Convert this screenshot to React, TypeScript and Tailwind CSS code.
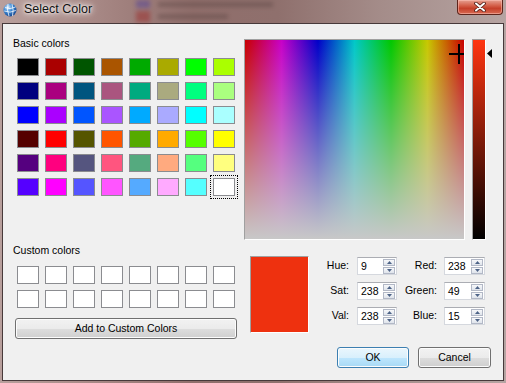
import React from 'react';

// Qt's standard palette, row by row
const BASIC_COLORS = [
  ['#000000', '#aa0000', '#005500', '#aa5500', '#00aa00', '#aaaa00', '#00ff00', '#aaff00'],
  ['#00007f', '#aa007f', '#00557f', '#aa557f', '#00aa7f', '#aaaa7f', '#00ff7f', '#aaff7f'],
  ['#0000ff', '#aa00ff', '#0055ff', '#aa55ff', '#00aaff', '#aaaaff', '#00ffff', '#aaffff'],
  ['#550000', '#ff0000', '#555500', '#ff5500', '#55aa00', '#ffaa00', '#55ff00', '#ffff00'],
  ['#55007f', '#ff007f', '#55557f', '#ff557f', '#55aa7f', '#ffaa7f', '#55ff7f', '#ffff7f'],
  ['#5500ff', '#ff00ff', '#5555ff', '#ff55ff', '#55aaff', '#ffaaff', '#55ffff', '#ffffff'],
];

const Swatch = ({ color, focused }: { color: string; focused?: boolean }) => (
  <div
    className={`h-[18px] w-[22px] border border-[#8b8c90] ${
      focused ? 'outline-1 outline-offset-2 outline-dotted outline-black' : ''
    }`}
    style={{ backgroundColor: color }}
  />
);

const SpinButton = ({ up }: { up?: boolean }) => (
  <div className="flex h-[7px] w-[12px] items-center justify-center border border-[#b2b8c6] bg-[linear-gradient(to_bottom,#f7f8fa,#dfe4ec)]">
    <svg width="5" height="3" viewBox="0 0 5 3">
      {up ? <path d="M0 3 L2.5 0 L5 3 Z" fill="#4d6387" /> : <path d="M0 0 L2.5 3 L5 0 Z" fill="#4d6387" />}
    </svg>
  </div>
);

const SpinBox = ({ value, wide }: { value: string; wide?: boolean }) => (
  <div
    className={`flex h-[18px] items-center border border-[#d5d8de] border-t-[#abadb3] bg-white ${
      wide ? 'w-[41px]' : 'w-[40px]'
    }`}
  >
    <span className="flex-1 pl-[3px] pt-[1px] leading-none text-black">{value}</span>
    <div className="mr-[1px] flex flex-col gap-[1px]">
      <SpinButton up />
      <SpinButton />
    </div>
  </div>
);

const WinButton = ({ label, isDefault, className }: { label: string; isDefault?: boolean; className?: string }) => (
  <div
    className={`flex h-[21px] items-center justify-center rounded-[3px] border text-black shadow-[inset_0_0_0_1px_#fcfcfc] ${
      isDefault
        ? 'border-[#3c7fb1] bg-[linear-gradient(to_bottom,#eaf6fd_0%,#d9f0fc_50%,#bee6fd_51%,#a7d9f5_100%)]'
        : 'border-[#707070] bg-[linear-gradient(to_bottom,#f2f2f2_0%,#ebebeb_50%,#dddddd_51%,#cfcfcf_100%)]'
    } ${className ?? ''}`}
  >
    {label}
  </div>
);

export default function App() {
  const spinRows = [
    { l: 'Hue:', lv: '9', r: 'Red:', rv: '238' },
    { l: 'Sat:', lv: '238', r: 'Green:', rv: '49' },
    { l: 'Val:', lv: '238', r: 'Blue:', rv: '15' },
  ];

  return (
    <div className="flex h-[383px] w-[506px] flex-col overflow-hidden bg-[linear-gradient(to_right,#b89f9c_0%,#a88986_18%,#906e6b_38%,#8f706d_55%,#a48c89_75%,#b6a4a2_100%)] font-['Liberation_Sans',Arial,sans-serif] text-[10.5px] text-black">
      {/* ─── Title bar ─────────────────────────────────────────── */}
      <div className="flex h-[23px] shrink-0 items-start">
        <svg className="ml-[3px] mt-[3px]" width="14" height="14" viewBox="0 0 14 14">
          <defs>
            <radialGradient id="globe" cx="35%" cy="30%" r="75%">
              <stop offset="0%" stopColor="#d6ecfc" />
              <stop offset="45%" stopColor="#3d8ad6" />
              <stop offset="100%" stopColor="#16468e" />
            </radialGradient>
          </defs>
          <circle cx="7" cy="7" r="6.5" fill="url(#globe)" />
          <path d="M2 4.5 Q7 7 12.5 4" stroke="#fff" strokeWidth="0.9" fill="none" opacity="0.85" />
          <path d="M1.2 8 Q7 10.5 12.8 7.5" stroke="#fff" strokeWidth="0.9" fill="none" opacity="0.85" />
          <path d="M5 1 Q3.5 7 6 13" stroke="#fff" strokeWidth="0.9" fill="none" opacity="0.85" />
          <path d="M9 1 Q11 7 9.5 13" stroke="#fff" strokeWidth="0.9" fill="none" opacity="0.85" />
        </svg>
        <span className="ml-[7px] mt-[2px] text-[12.5px] leading-[15px] text-[#111] [text-shadow:0_0_6px_#fff,0_0_10px_#fff,0_0_3px_#fff]">
          Select Color
        </span>

        {/* blurred windows behind the glass */}
        <div className="ml-[44px] flex flex-col gap-[3px] opacity-45 blur-[2px]">
          <div className="flex items-center gap-[8px]">
            <div className="h-[8px] w-[14px] bg-[#4b3c9c]" />
            <div className="h-[5px] w-[115px] bg-[#5a4442]" />
          </div>
          <div className="flex items-center gap-[8px]">
            <div className="h-[11px] w-[14px] bg-[#9b2222]" />
            <div className="h-[5px] w-[70px] bg-[#5a4442]" />
          </div>
        </div>

        <div className="ml-auto mr-[3px] flex h-[15px] w-[46px] items-center justify-center rounded-b-[4px] border border-t-0 border-[#5e241b] bg-[linear-gradient(to_bottom,#e6a091_0%,#d4604a_40%,#c5402a_60%,#d86a52_100%)] shadow-[inset_0_0_0_1px_rgba(255,200,190,0.5)]">
          <svg width="12" height="10" viewBox="0 0 12 10">
            <path d="M2 1.5 L10 8.5 M10 1.5 L2 8.5" stroke="#4a1a14" strokeWidth="3.6" strokeLinecap="round" />
            <path d="M2 1.5 L10 8.5 M10 1.5 L2 8.5" stroke="#fff" strokeWidth="2" strokeLinecap="round" />
          </svg>
        </div>
      </div>

      {/* ─── Client area ───────────────────────────────────────── */}
      <div className="mx-[2px] flex h-[358px] shrink-0 items-start border border-[#47393a] bg-[#f0f0f0] pl-[10px] pt-[13px]">
        {/* left column: basic + custom colours */}
        <div className="flex w-[224px] flex-col">
          <span className="h-[13px] leading-[13px]">Basic colors</span>
          <div className="ml-[4px] mt-[8px] grid grid-cols-[repeat(8,22px)] gap-[6px]">
            {BASIC_COLORS.flatMap((row, r) =>
              row.map((c, i) => <Swatch key={`${r}-${i}`} color={c} focused={r === 5 && i === 7} />),
            )}
          </div>

          <span className="mt-[48px] h-[13px] leading-[13px]">Custom colors</span>
          <div className="ml-[4px] mt-[9px] grid grid-cols-[repeat(8,22px)] gap-[6px]">
            {Array.from({ length: 16 }).map((_, i) => (
              <Swatch key={i} color="#ffffff" />
            ))}
          </div>

          <WinButton label="Add to Custom Colors" className="ml-[2px] mt-[10px] w-[222px]" />
        </div>

        {/* right column: spectrum, value bar, fields, buttons */}
        <div className="ml-[7px] mt-[2px] flex flex-col">
          <div className="flex items-start">
            <div className="relative h-[201px] w-[221px] overflow-hidden border border-[#a0a0a0] border-b-white border-r-white [background-image:linear-gradient(to_bottom,rgba(200,200,200,0),rgb(200,200,200)),linear-gradient(to_right,#c80000_0%,#c800c8_16.67%,#0000c8_33.33%,#00c8c8_50%,#00c800_66.67%,#c8c800_83.33%,#c80000_100%)]">
              {/* crosshair */}
              <div className="absolute left-[204px] top-[13px] h-[2px] w-[20px] bg-black" />
              <div className="absolute left-[213px] top-[4px] h-[20px] w-[2px] bg-black" />
            </div>
            <div className="ml-[7px] h-[201px] w-[14px] border border-[#a0a0a0] border-b-white border-r-white bg-[linear-gradient(to_bottom,#ff3511,#000000)]" />
            <svg className="ml-[1px] mt-[10px]" width="5" height="9" viewBox="0 0 5 9">
              <path d="M5 0 L0 4.5 L5 9 Z" fill="#000" />
            </svg>
          </div>

          <div className="mt-[16px] flex items-start">
            <div className="ml-[6px] h-[77px] w-[59px] border border-[#a0a0a0] border-b-white border-r-white bg-[#ee310f]" />
            <div className="mt-[1px] grid grid-cols-[40px_48px_40px_48px] gap-y-[7px]">
              {spinRows.map((row) => (
                <React.Fragment key={row.l}>
                  <span className="self-center text-right">{row.l}</span>
                  <div className="flex justify-end">
                    <SpinBox value={row.lv} />
                  </div>
                  <span className="self-center text-right">{row.r}</span>
                  <div className="flex justify-end">
                    <SpinBox value={row.rv} wide />
                  </div>
                </React.Fragment>
              ))}
            </div>
          </div>

          <div className="ml-[93px] mt-[14px] flex gap-[9px]">
            <WinButton label="OK" isDefault className="w-[72px]" />
            <WinButton label="Cancel" className="w-[73px]" />
          </div>
        </div>
      </div>
    </div>
  );
}
